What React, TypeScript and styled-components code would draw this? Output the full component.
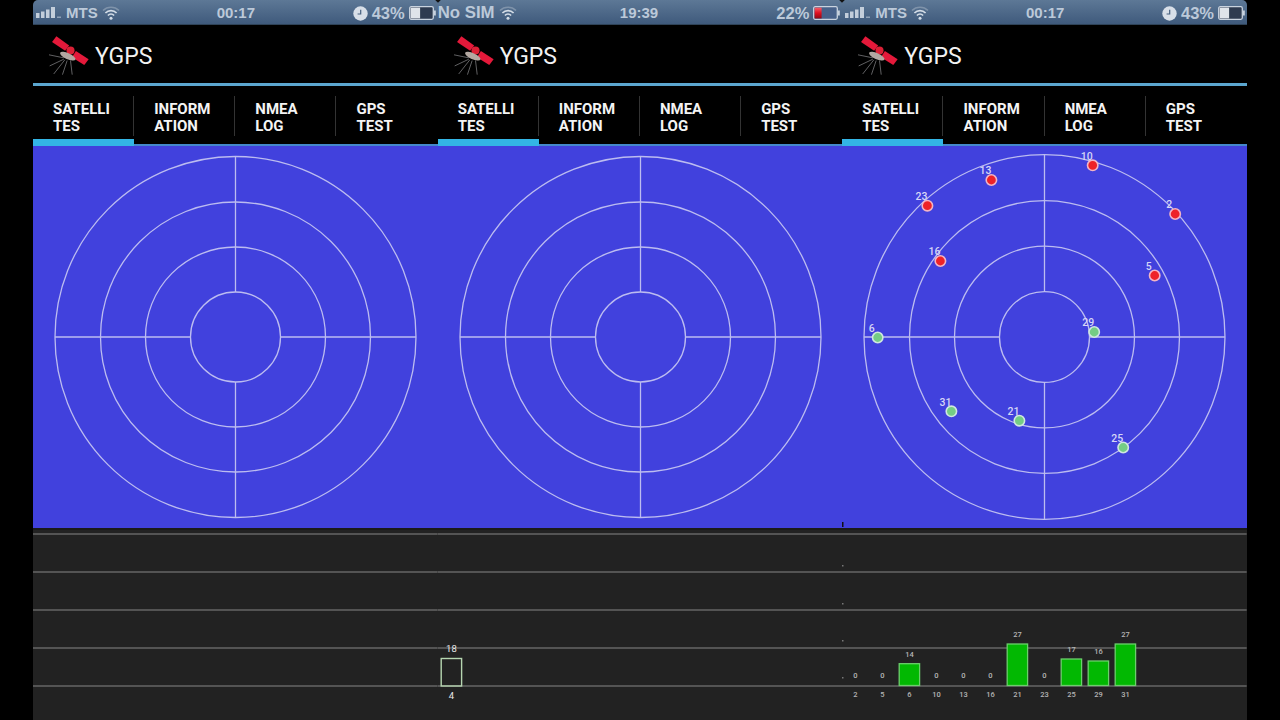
import React from "react";
import styled, { createGlobalStyle } from "styled-components";

const GlobalStyle = createGlobalStyle`
    html, body {
        margin: 0;
        padding: 0;
        background: #000;
    }
`

type Sat = { id: number; x: number; y: number; on?: boolean };
type Bar = { label: number; value: number; top?: number };

const SATS: Sat[] = [
    { id: 10, x: 250.7, y: 19.3 },
    { id: 13, x: 149.4, y: 34 },
    { id: 23, x: 85.4, y: 59.7 },
    { id: 2, x: 333.2, y: 68 },
    { id: 16, x: 98.4, y: 115 },
    { id: 5, x: 312.7, y: 129.5 },
    { id: 6, x: 35.7, y: 191.5, on: true },
    { id: 29, x: 252.2, y: 186, on: true },
    { id: 31, x: 109.4, y: 265.3, on: true },
    { id: 21, x: 177.4, y: 274.7, on: true },
    { id: 25, x: 281.2, y: 301.5, on: true },
];

const BARS: Bar[] = [
    { label: 2, value: 0 },
    { label: 5, value: 0 },
    { label: 6, value: 14, top: 135.7 },
    { label: 10, value: 0 },
    { label: 13, value: 0 },
    { label: 16, value: 0 },
    { label: 21, value: 27, top: 116 },
    { label: 23, value: 0 },
    { label: 25, value: 17, top: 131 },
    { label: 29, value: 16, top: 133 },
    { label: 31, value: 27, top: 116 },
];

const TABS = [["SATELLI", "TES"], ["INFORM", "ATION"], ["NMEA", "LOG"], ["GPS", "TEST"]];
const GRID_LINES = [6, 44, 82, 120, 158];
const TICKS = [37, 75, 112, 149];

const SignalIcon = () => (
    <StatusSvg width="26" height="16" viewBox="0 0 26 16">
        <rect x="0" y="8" width="3.5" height="5" fill="#c3cedb" />
        <rect x="5" y="6.5" width="3.5" height="6.5" fill="#c3cedb" />
        <rect x="10" y="4.5" width="3.5" height="8.5" fill="#c3cedb" />
        <rect x="15" y="2" width="4" height="11" fill="#c3cedb" />
        <rect x="21" y="11.5" width="4" height="1.5" fill="#8fa2b8" />
    </StatusSvg>
);

const WifiIcon = () => (
    <StatusSvg width="18" height="16" viewBox="0 0 18 16">
        <path d="M1 5.5 A11.5 11.5 0 0 1 17 5.5" fill="none" stroke="#7f93aa" strokeWidth="1.6" />
        <path d="M3.4 8 A8 8 0 0 1 14.6 8" fill="none" stroke="#d4dde7" strokeWidth="1.7" />
        <path d="M5.9 10.5 A4.4 4.4 0 0 1 12.1 10.5" fill="none" stroke="#d4dde7" strokeWidth="1.7" />
        <circle cx="9" cy="13.3" r="1.5" fill="#d4dde7" />
    </StatusSvg>
);

const ClockIcon = () => (
    <StatusSvg width="15" height="15" viewBox="0 0 15 15">
        <circle cx="7.5" cy="7.5" r="7.2" fill="#d8dfe8" />
        <path d="M7.7 3.8 V8 H4.6" fill="none" stroke="#46607e" strokeWidth="1.2" />
    </StatusSvg>
);

const BatteryIcon = ({ low }: { low?: boolean }) => (
    <StatusSvg width="27" height="14" viewBox="0 0 27 14">
        <defs>
            <linearGradient id="lowCharge" x1="0" y1="0" x2="0" y2="1">
                <stop offset="0" stopColor="#f4606a" />
                <stop offset="0.5" stopColor="#e01020" />
                <stop offset="1" stopColor="#8e0a14" />
            </linearGradient>
        </defs>
        <rect x="0.7" y="0.7" width="23.6" height="12.6" rx="1.5" fill={low ? "#48628a" : "#2e3b50"} stroke="#c9d3df" strokeWidth="1.3" />
        <rect x="1.6" y="1.6" width={low ? 7 : 9.5} height="10.8" fill={low ? "url(#lowCharge)" : "#dfe4ea"} />
        <rect x="25" y="4.5" width="1.8" height="5" fill="#c9d3df" />
    </StatusSvg>
);

const Logo = () => (
    <LogoSvg viewBox="25 20 125 120">
        <g stroke="#77777a" strokeWidth="2.4">
            <line x1="72" y1="84" x2="28" y2="75" />
            <line x1="72" y1="88" x2="30" y2="108" />
            <line x1="75" y1="90" x2="42" y2="132" />
            <line x1="82" y1="92" x2="68" y2="134" />
            <line x1="92" y1="92" x2="97" y2="134" />
        </g>
        <polygon points="50,20 88,47 76,63 37,37" fill="#e4193a" />
        <polygon points="108,64 146,88 133,105 96,82" fill="#e4193a" />
        <circle cx="92" cy="62" r="12" fill="#dc2036" />
        <ellipse cx="84" cy="79" rx="25" ry="9" transform="rotate(24 84 79)" fill="#b3a8a2" />
    </LogoSvg>
);

const Radar = ({ ry = 1, sats = [] }: { ry?: number; sats?: Sat[] }) => {
    const cx = 202.5;
    const cy = 191;
    return (
        <RadarSvg viewBox="0 0 404.67 382">
            {[45, 90, 135, 180.5].map(r => (
                <ellipse key={r} cx={cx} cy={cy} rx={r} ry={r * ry} fill="none" stroke="#bcbcf0" strokeWidth="1.3" />
            ))}
            <g stroke="#bcbcf0" strokeWidth="1.3">
                <line x1={cx} y1={cy - 180.5 * ry} x2={cx} y2={cy - 45 * ry} />
                <line x1={cx} y1={cy + 45 * ry} x2={cx} y2={cy + 180.5 * ry} />
                <line x1={cx - 180.5} y1={cy} x2={cx - 45} y2={cy} />
                <line x1={cx + 45} y1={cy} x2={cx + 180.5} y2={cy} />
            </g>
            {sats.map(s => (
                <g key={s.id}>
                    <circle cx={s.x} cy={s.y} r="5.2" fill={s.on ? "#74cc84" : "#ee2228"} stroke={s.on ? "#cfe6e0" : "#f3b4c4"} strokeWidth="1.6" />
                    <SatLabel x={s.x - 6} y={s.y - 5.5} textAnchor="middle">{s.id}</SatLabel>
                </g>
            ))}
            {sats.length > 0 && <rect x="0" y="376" width="1.5" height="5" fill="#111" />}
        </RadarSvg>
    );
};

const Chart = ({ bars = [], ticks, children }: { bars?: Bar[]; ticks?: boolean; children?: React.ReactNode }) => (
    <ChartSvg viewBox="0 0 404.67 192">
        {GRID_LINES.map(y => (
            <line key={y} x1="0" y1={y} x2="404.67" y2={y} stroke="#666" strokeWidth="1.5" />
        ))}
        {ticks && TICKS.map(y => <rect key={y} x="0" y={y} width="1.5" height="1.5" fill="#777" />)}
        {bars.map((b, i) => {
            const cx = 13.4 + i * 27;
            return (
                <g key={b.label}>
                    {b.top !== undefined && (
                        <rect x={cx - 10.2} y={b.top} width="20.4" height={157.5 - b.top} fill="#02b802" stroke="#6ccf6c" strokeWidth="1.3" />
                    )}
                    <BarValue x={cx} y={b.top !== undefined ? b.top - 7 : 150.5} textAnchor="middle">{b.value}</BarValue>
                    <BarValue x={cx} y={169.5} textAnchor="middle">{b.label}</BarValue>
                </g>
            );
        })}
        {children}
    </ChartSvg>
);

const Phone = ({ status, radar, chart }: { status: React.ReactNode; radar: React.ReactNode; chart: React.ReactNode }) => (
    <Panel>
        {status}
        <AppBar>
            <Logo />
            <AppTitle>YGPS</AppTitle>
        </AppBar>
        <TabBar>
            {TABS.map((t, i) => (
                <Tab key={t[0]} $active={i === 0} $divider={i < 3}>
                    {t[0]}<br />{t[1]}
                </Tab>
            ))}
        </TabBar>
        <RadarArea>{radar}</RadarArea>
        <ChartArea>{chart}</ChartArea>
    </Panel>
);

const App = () => (
    <>
        <GlobalStyle />
        <Page>
            <Phone
                status={
                    <StatusBar $left>
                        <StatusSide>
                            <SignalIcon />
                            <StatusText>MTS</StatusText>
                            <WifiIcon />
                        </StatusSide>
                        <StatusTime>00:17</StatusTime>
                        <StatusSide $right>
                            <ClockIcon />
                            <StatusText $size={16.5}>43%</StatusText>
                            <BatteryIcon />
                        </StatusSide>
                    </StatusBar>
                }
                radar={<Radar />}
                chart={<Chart />}
            />
            <Phone
                status={
                    <StatusBar $notch $flush>
                        <StatusSide>
                            <StatusText $size={16.8}>No SIM</StatusText>
                            <WifiIcon />
                        </StatusSide>
                        <StatusTime>19:39</StatusTime>
                        <StatusSide $right>
                            <StatusText $size={16.5}>22%</StatusText>
                            <BatteryIcon low />
                        </StatusSide>
                    </StatusBar>
                }
                radar={<Radar />}
                chart={
                    <Chart>
                        <rect x="3.2" y="130.5" width="20.4" height="27.5" fill="none" stroke="#b5d5b0" strokeWidth="1.4" />
                        <ChartNote x="13.4" y="124" textAnchor="middle">18</ChartNote>
                        <ChartNote x="13.4" y="171" textAnchor="middle">4</ChartNote>
                    </Chart>
                }
            />
            <Phone
                status={
                    <StatusBar $right $notch>
                        <StatusSide>
                            <SignalIcon />
                            <StatusText>MTS</StatusText>
                            <WifiIcon />
                        </StatusSide>
                        <StatusTime>00:17</StatusTime>
                        <StatusSide $right>
                            <ClockIcon />
                            <StatusText $size={16.5}>43%</StatusText>
                            <BatteryIcon />
                        </StatusSide>
                    </StatusBar>
                }
                radar={<Radar ry={1.01} sats={SATS} />}
                chart={<Chart bars={BARS} ticks />}
            />
        </Page>
    </>
);

export default App;

const Page = styled.div`
    width: 1280px;
    height: 720px;
    padding: 0 33px;
    box-sizing: border-box;
    background: #000;
    display: grid;
    grid-template-columns: repeat(3, 1fr);
    overflow: hidden;
`

const Panel = styled.div`
    display: flex;
    flex-direction: column;
    min-width: 0;
    height: 720px;
`

const StatusBar = styled.div<{ $left?: boolean; $right?: boolean; $notch?: boolean; $flush?: boolean }>`
    position: relative;
    flex: none;
    height: 25px;
    box-sizing: border-box;
    padding: 1px 2px 0 ${p => (p.$flush ? "0" : "3px")};
    display: grid;
    grid-template-columns: 1fr auto 1fr;
    align-items: center;
    background: linear-gradient(#5d7896, #3f5a7c);
    border-bottom: 1px solid #2f4358;
    border-top-left-radius: ${p => (p.$left ? "5px" : "0")};
    border-top-right-radius: ${p => (p.$right ? "5px" : "0")};

    &::before {
        content: "";
        display: ${p => (p.$notch ? "block" : "none")};
        position: absolute;
        left: -2px;
        top: -2px;
        width: 4px;
        height: 4px;
        background: #111;
        transform: rotate(45deg);
    }
`

const StatusSide = styled.div<{ $right?: boolean }>`
    display: flex;
    align-items: center;
    gap: 4px;
    justify-content: ${p => (p.$right ? "flex-end" : "flex-start")};
`

const StatusSvg = styled.svg`
    flex: none;
    display: block;
`

const StatusText = styled.span<{ $size?: number }>`
    font-family: "Liberation Sans", Arial, sans-serif;
    font-weight: 700;
    font-size: ${p => p.$size ?? 15}px;
    line-height: 24px;
    color: #bcc9d9;
    white-space: nowrap;
`

const StatusTime = styled(StatusText)`
    text-align: center;
`

const AppBar = styled.div`
    flex: none;
    height: 61px;
    box-sizing: border-box;
    padding-left: 15px;
    display: flex;
    align-items: center;
    gap: 5px;
    background: #000;
    border-bottom: 3px solid #5ba6cf;
`

const LogoSvg = styled.svg`
    width: 42px;
    height: 41px;
    flex: none;
    margin-top: 5px;
`

const AppTitle = styled.div`
    font-family: Roboto, sans-serif;
    font-size: 23px;
    color: #f2f2f2;
    margin-top: 4px;
`

const TabBar = styled.div`
    flex: none;
    height: 60px;
    display: grid;
    grid-template-columns: repeat(4, 101.17px);
    background: #000;
`

const Tab = styled.div<{ $active?: boolean; $divider?: boolean }>`
    position: relative;
    box-sizing: border-box;
    padding: 15px 0 0 20px;
    font-family: Roboto, sans-serif;
    font-weight: 700;
    font-size: 15px;
    line-height: 17px;
    color: #f4f4f4;
    border-bottom: ${p => (p.$active ? "7px solid #33b5e5" : "2px solid #4488cc")};

    &::after {
        content: "";
        display: ${p => (p.$divider ? "block" : "none")};
        position: absolute;
        right: 0;
        top: 10px;
        height: 40px;
        width: 1px;
        background: #333;
    }
`

const RadarArea = styled.div`
    flex: none;
    height: 382px;
    background: #4141dd;
`

const RadarSvg = styled.svg`
    display: block;
    width: 100%;
    height: 100%;
`

const SatLabel = styled.text`
    font-family: Roboto, sans-serif;
    font-size: 10.5px;
    font-weight: 500;
    fill: #d6d6f6;
`

const ChartArea = styled.div`
    flex: 1;
    min-height: 0;
    background: #222;
    border-top: 2px solid #1a1a1a;
    box-sizing: border-box;
`

const ChartSvg = styled.svg`
    display: block;
    width: 100%;
    margin-top: -2px;
    height: 192px;
`

const BarValue = styled.text`
    font-family: Roboto, sans-serif;
    font-size: 7.5px;
    font-weight: 500;
    fill: #b5b5b5;
`

const ChartNote = styled.text`
    font-family: Roboto, sans-serif;
    font-size: 9.5px;
    fill: #e8e8e8;
`
